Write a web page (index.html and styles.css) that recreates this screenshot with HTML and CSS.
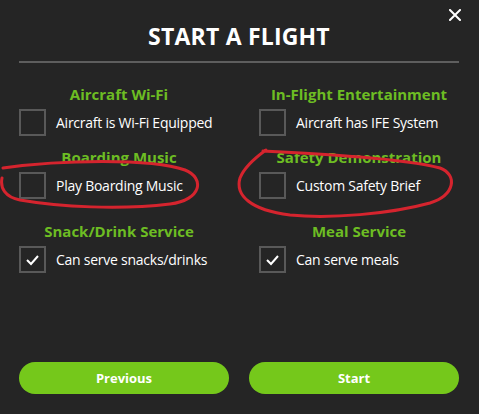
FILE: index.html
```html
<!DOCTYPE html>
<html lang="en">
<head>
<meta charset="utf-8">
<title>Start a Flight</title>
<link rel="stylesheet" href="styles.css">
</head>
<body>
<div class="dialog">
  <button class="close" aria-label="Close">
    <svg width="12" height="12" viewBox="0 0 12 12"><path d="M1 1L11 11M11 1L1 11" stroke="#fff" stroke-width="2" stroke-linecap="square"/></svg>
  </button>
  <h1 class="title">START A FLIGHT</h1>
  <div class="divider"></div>

  <div class="grid">
    <div class="section">
      <h2 class="heading">Aircraft Wi-Fi</h2>
      <label class="option"><span class="box"></span><span class="label">Aircraft is Wi-Fi Equipped</span></label>
    </div>
    <div class="section">
      <h2 class="heading">In-Flight Entertainment</h2>
      <label class="option"><span class="box"></span><span class="label">Aircraft has IFE System</span></label>
    </div>

    <div class="section row2">
      <h2 class="heading">Boarding Music</h2>
      <label class="option"><span class="box"></span><span class="label">Play Boarding Music</span></label>
    </div>
    <div class="section row2">
      <h2 class="heading">Safety Demonstration</h2>
      <label class="option"><span class="box"></span><span class="label">Custom Safety Brief</span></label>
    </div>

    <div class="section row3">
      <h2 class="heading">Snack/Drink Service</h2>
      <label class="option"><span class="box checked"><svg width="23" height="23" viewBox="0 0 23 23"><path d="M6 12L10 16L17 8" fill="none" stroke="#fff" stroke-width="2"/></svg></span><span class="label">Can serve snacks/drinks</span></label>
    </div>
    <div class="section row3">
      <h2 class="heading">Meal Service</h2>
      <label class="option"><span class="box checked"><svg width="23" height="23" viewBox="0 0 23 23"><path d="M6 12L10 16L17 8" fill="none" stroke="#fff" stroke-width="2"/></svg></span><span class="label">Can serve meals</span></label>
    </div>
  </div>

  <div class="actions">
    <button class="btn">Previous</button>
    <button class="btn">Start</button>
  </div>

  <svg class="annotations" width="479" height="414" viewBox="0 0 479 414">
    <path d="M3 168 C60 160 150 158 185 170 C205 178 202 200 170 204 C120 210 60 207 20 200 C5 197 0 188 2 178" fill="none" stroke="#d5242e" stroke-width="3" stroke-linecap="round"/>
    <path d="M263 151 C320 154 400 158 440 168 C458 175 455 195 430 203 C390 214 330 219 290 215 C250 210 235 195 240 178 C244 168 252 160 266 150" fill="none" stroke="#d5242e" stroke-width="3" stroke-linecap="round"/>
  </svg>
</div>
</body>
</html>
```

FILE: styles.css
```css
* { box-sizing: border-box; }
html, body {
  margin: 0;
  padding: 0;
  background: #252525;
}
body {
  width: 479px;
  height: 414px;
  overflow: hidden;
  font-family: "Open Sans", "Noto Sans", sans-serif;
  color: #fff;
}
.dialog {
  position: relative;
  height: 414px;
  display: flex;
  flex-direction: column;
  padding: 21px 20px 20px 19px;
}
.close {
  position: absolute;
  top: 9px;
  right: 18px;
  width: 12px;
  height: 12px;
  padding: 0;
  border: 0;
  background: none;
  display: block;
}
.close svg { display: block; }
.title {
  margin: 0;
  font-size: 23px;
  line-height: 30px;
  font-weight: 700;
  text-align: center;
  letter-spacing: 0.2px;
}
.divider {
  height: 2px;
  background: #5e5e5e;
  margin-top: 10px;
}
.grid {
  display: grid;
  grid-template-columns: 200px 200px;
  column-gap: 40px;
  margin-top: 21px;
}
.section {
  display: flex;
  flex-direction: column;
}
.row2 { margin-top: 11px; }
.row3 { margin-top: 22px; }
.heading {
  margin: 0 0 5px;
  font-size: 15px;
  line-height: 20px;
  font-weight: 700;
  color: #6dbd23;
  text-align: center;
  white-space: nowrap;
}
.option {
  display: flex;
  align-items: center;
  gap: 10px;
  height: 27px;
}
.box {
  width: 27px;
  height: 27px;
  border: 2px solid #595959;
  flex: none;
  display: flex;
  align-items: center;
  justify-content: center;
}
.box svg { display: block; }
.label {
  font-size: 14px;
  letter-spacing: -0.25px;
  white-space: nowrap;
}
.actions {
  margin-top: auto;
  display: flex;
  gap: 20px;
}
.btn {
  width: 210px;
  height: 32px;
  border: 0;
  border-radius: 16px;
  background: #75c81b;
  color: #fff;
  font-family: "Open Sans", "Noto Sans", sans-serif;
  font-size: 13px;
  font-weight: 700;
  padding: 0;
}
.annotations {
  position: absolute;
  left: 0;
  top: 0;
  pointer-events: none;
}
```
